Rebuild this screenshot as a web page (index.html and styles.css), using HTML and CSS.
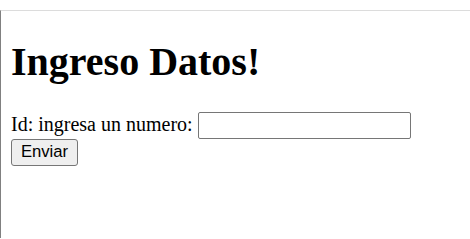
FILE: index.html
```html
<!DOCTYPE html>
<html lang="es">
<head>
    <meta charset="UTF-8">
    <meta name="viewport" content="width=device-width, initial-scale=1.0">
    <title>Ingreso Datos</title>
    <link rel="stylesheet" href="styles.css">
</head>
<body>
    <div class="frame">
        <h1>Ingreso Datos!</h1>
        <form class="data-form" onsubmit="return false">
            <label for="id-input">Id: ingresa un numero:</label>
            <input type="text" id="id-input" name="id"><br>
            <button type="submit">Enviar</button>
        </form>
    </div>
</body>
</html>
```

FILE: styles.css
```css
html, body {
    margin: 0;
    padding: 0;
    background-color: #fff;
}
body {
    font-family: "Liberation Serif", "Times New Roman", serif;
    font-size: 20px;
    color: #000;
}
.frame {
    margin-top: 10px;
    border-top: 1px solid #dcdcdc;
    border-left: 1px solid #808080;
    padding: 0 10px;
    min-height: calc(100vh - 11px);
    box-sizing: border-box;
}
h1 {
    font-size: 40px;
    margin: 26.8px 0;
}
.data-form {
    margin: 0;
}
.data-form input {
    width: 213px;
    height: 27px;
    box-sizing: border-box;
    border: 1px solid #767676;
    border-radius: 2px;
    padding: 1px 3px;
    font-size: 16.67px;
    font-family: "Liberation Sans", Arial, sans-serif;
    vertical-align: baseline;
}
.data-form button {
    width: 67px;
    height: 27px;
    box-sizing: border-box;
    padding: 0 8px;
    font-size: 16.67px;
    font-family: "Liberation Sans", Arial, sans-serif;
    background-color: #efefef;
    color: #000;
    border: 1px solid #767676;
    border-radius: 3px;
}
```
